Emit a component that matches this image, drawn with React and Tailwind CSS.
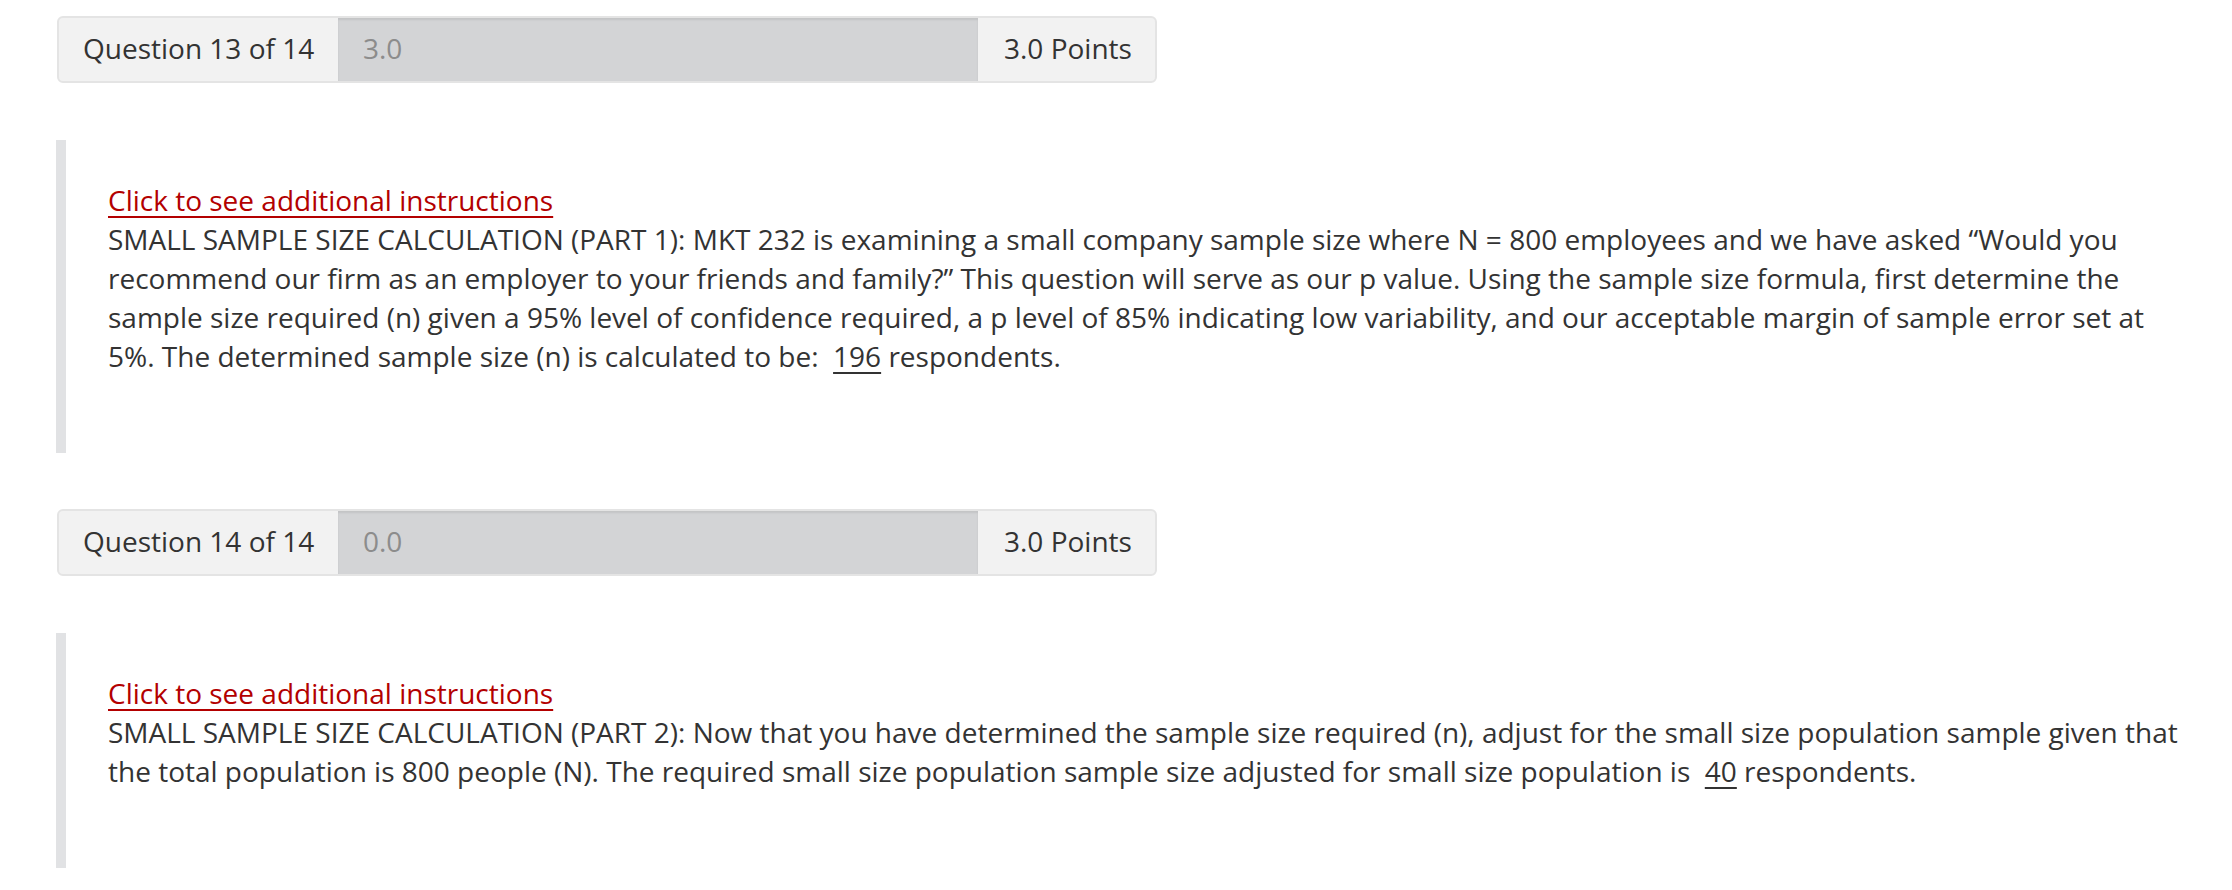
export default function App() {
  const Header = ({ label, score, className }) => (
    <div
      className={
        "flex h-[67px] w-[1100px] ml-px overflow-hidden rounded-[6px] border-2 border-[#e4e4e4] bg-[#f2f2f2] text-[28px] leading-none " +
        className
      }
    >
      <div className="flex w-[279px] shrink-0 items-center pb-[3px] pl-[24px] text-[#333]">
        {label}
      </div>
      <div className="flex w-[640px] shrink-0 items-center bg-[#d3d4d6] pb-[3px] pl-[25px] text-[#8c8c8c] shadow-[inset_0_2px_2px_rgba(0,0,0,0.08)]">
        {score}
      </div>
      <div className="flex flex-1 items-center pb-[3px] pl-[26px] text-[#333]">3.0 Points</div>
    </div>
  );

  const Block = ({ children, className }) => (
    <div
      className={
        "border-l-[10px] border-[#e1e2e4] pl-[42px] pt-[41px] pb-[77px] text-[28px] leading-[39px] text-[#333] " +
        className
      }
    >
      <div>
        <a href="#" className="text-[#b30000] underline decoration-2 underline-offset-[5px]">
          Click to see additional instructions
        </a>
      </div>
      <div>{children}</div>
    </div>
  );

  return (
    <div className="min-h-[890px] bg-white pt-4 pl-14 pr-[42px] font-['Open_Sans',sans-serif]">
      <Header label="Question 13 of 14" score="3.0" />
      <Block className="mt-[57px]">
        SMALL SAMPLE SIZE CALCULATION (PART 1): MKT 232 is examining a small company sample size
        where N = 800 employees and we have asked “Would you recommend our firm as an employer to
        your friends and family?” This question will serve as our p value. Using the sample size
        formula, first determine the sample size required (n) given a 95% level of confidence
        required, a p level of 85% indicating low variability, and our acceptable margin of sample
        error set at 5%. The determined sample size (n) is calculated to be:{"\u00a0 "}
        <span className="underline decoration-2 underline-offset-[5px]">196</span> respondents.
      </Block>
      <Header label="Question 14 of 14" score="0.0" className="mt-[56px]" />
      <Block className="mt-[57px]">
        SMALL SAMPLE SIZE CALCULATION (PART 2): Now that you have determined the sample size required
        (n), adjust for the small size population sample given that the total population is 800
        people (N). The required small size population sample size adjusted for small size
        population is{"\u00a0 "}
        <span className="underline decoration-2 underline-offset-[5px]">40</span> respondents.
      </Block>
    </div>
  );
}
